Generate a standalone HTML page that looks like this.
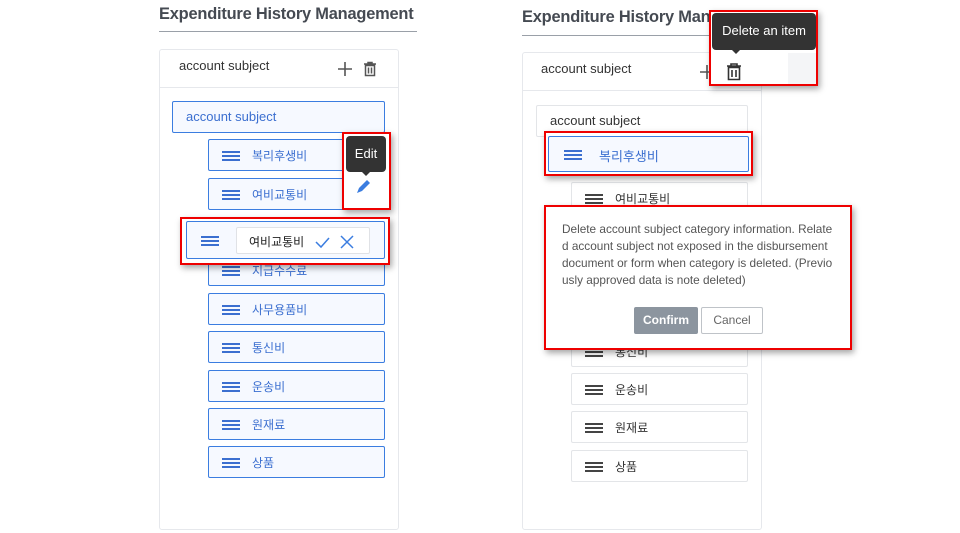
<!DOCTYPE html><html><head><meta charset="utf-8"><style>
body{margin:0;width:960px;height:533px;background:#fff;position:relative;overflow:hidden;font-family:"Liberation Sans","Noto Sans CJK KR",sans-serif;}
.a{position:absolute;box-sizing:border-box;}
.t{font-size:16.4px;font-weight:bold;color:#454a52;letter-spacing:-0.2px}
.panel{border:1px solid #e6e8ec;border-radius:3px;background:#fff}
.hd{font-size:13px;color:#333}
.it{border:1px solid #3b7de0;background:#f6f9ff;border-radius:2px;height:32px}
.it2{border:1px solid #e3e5e8;background:#fff;border-radius:2px;height:32px}
.hb{position:absolute;width:18px;height:2px;background:#3b6fd0;box-shadow:0 4px 0 #3b6fd0,0 8px 0 #3b6fd0}
.it2 .hb{background:#444;box-shadow:0 4px 0 #444,0 8px 0 #444}
.lb{position:absolute;font-size:12px;color:#3b6fd0;top:7px}
.it2 .lb{color:#333}
.red{border:2px solid #e00;box-shadow:2px 3px 6px rgba(0,0,0,.35)}
.tip{background:#333;color:#fff;border-radius:4px;font-size:13px;text-align:center}
</style></head><body>
<div class="a t" style="left:159px;top:5px">Expenditure History Management</div>
<div class="a" style="left:159px;top:31px;width:258px;height:1px;background:#9aa0a8"></div>
<div class="a panel" style="left:159px;top:49px;width:240px;height:481px"></div>
<div class="a hd" style="left:179px;top:58px">account subject</div>
<div class="a" style="left:160px;top:87px;width:238px;height:1px;background:#e6e8ec"></div>
<svg class="a" style="left:337px;top:61px" width="44" height="16"><path d="M8 1v14M1 8h14" stroke="#555" stroke-width="1.6"/><path d="M27 3h12M31 3V1.5h4V3M28.5 4.5h9v10h-9zM31.5 6.5v6M34.5 6.5v6" stroke="#555" stroke-width="1.5" fill="none"/></svg>
<div class="a it" style="left:172px;top:101px;width:213px"><span class="lb" style="left:13px;font-size:13px;top:7px">account subject</span></div>
<div class="a it" style="left:208px;top:139px;width:177px"><div class="hb" style="left:13px;top:11px"></div><span class="lb" style="left:43px">복리후생비</span></div>
<div class="a it" style="left:208px;top:178px;width:177px"><div class="hb" style="left:13px;top:11px"></div><span class="lb" style="left:43px">여비교통비</span></div>
<div class="a it" style="left:208px;top:254px;width:177px"><div class="hb" style="left:13px;top:11px"></div><span class="lb" style="left:43px">지급수수료</span></div>
<div class="a it" style="left:208px;top:293px;width:177px"><div class="hb" style="left:13px;top:11px"></div><span class="lb" style="left:43px">사무용품비</span></div>
<div class="a it" style="left:208px;top:331px;width:177px"><div class="hb" style="left:13px;top:11px"></div><span class="lb" style="left:43px">통신비</span></div>
<div class="a it" style="left:208px;top:370px;width:177px"><div class="hb" style="left:13px;top:11px"></div><span class="lb" style="left:43px">운송비</span></div>
<div class="a it" style="left:208px;top:408px;width:177px"><div class="hb" style="left:13px;top:11px"></div><span class="lb" style="left:43px">원재료</span></div>
<div class="a it" style="left:208px;top:446px;width:177px"><div class="hb" style="left:13px;top:11px"></div><span class="lb" style="left:43px">상품</span></div>
<div class="a red" style="left:342px;top:132px;width:49px;height:78px;background:#fff">
<div class="a tip" style="left:2px;top:2px;width:40px;height:36px;line-height:36px;font-size:13px">Edit</div>
<div class="a" style="left:17px;top:37px;width:0;height:0;border:5px solid transparent;border-top-color:#333"></div>
<svg class="a" style="left:10px;top:44px" width="18" height="18"><path d="M3 15l2-5 8-8 3 3-8 8z" fill="#3b7de0"/></svg></div>
<div class="a red" style="left:180px;top:217px;width:210px;height:48px;background:#fff">
<div class="a it" style="left:4px;top:2px;width:199px;height:38px"><div class="hb" style="left:14px;top:14px"></div>
<div class="a" style="left:49px;top:5px;width:134px;height:27px;border:1px solid #e0e2e6;background:#fff;border-radius:2px"><span style="position:absolute;left:12px;top:5px;font-size:12px;color:#222">여비교통비</span>
<svg class="a" style="left:78px;top:6px" width="50" height="16"><path d="M1 8l5 5 8-9" stroke="#3b7de0" stroke-width="1.5" fill="none"/><path d="M26 2l12 12M38 2L26 14" stroke="#3b7de0" stroke-width="1.5"/></svg></div></div></div>

<div class="a t" style="left:522px;top:8px">Expenditure History Man</div>
<div class="a" style="left:522px;top:35px;width:190px;height:1px;background:#9aa0a8"></div>
<div class="a panel" style="left:522px;top:52px;width:240px;height:478px"></div>
<div class="a hd" style="left:541px;top:61px">account subject</div>
<div class="a" style="left:523px;top:90px;width:238px;height:1px;background:#e6e8ec"></div>
<svg class="a" style="left:699px;top:64px" width="14" height="16"><path d="M8 1v14M1 8h14" stroke="#555" stroke-width="1.6"/></svg>
<div class="a it2" style="left:536px;top:105px;width:212px"><span class="lb" style="left:13px;font-size:13px;top:7px;color:#333">account subject</span></div>
<div class="a it2" style="left:571px;top:182px;width:177px"><div class="hb" style="left:13px;top:11px"></div><span class="lb" style="left:43px">여비교통비</span></div>
<div class="a it2" style="left:571px;top:335px;width:177px"><div class="hb" style="left:13px;top:11px"></div><span class="lb" style="left:43px">통신비</span></div>
<div class="a it2" style="left:571px;top:373px;width:177px"><div class="hb" style="left:13px;top:11px"></div><span class="lb" style="left:43px">운송비</span></div>
<div class="a it2" style="left:571px;top:411px;width:177px"><div class="hb" style="left:13px;top:11px"></div><span class="lb" style="left:43px">원재료</span></div>
<div class="a it2" style="left:571px;top:450px;width:177px"><div class="hb" style="left:13px;top:11px"></div><span class="lb" style="left:43px">상품</span></div>
<div class="a red" style="left:544px;top:131px;width:209px;height:45px;background:#fff">
<div class="a it" style="left:2px;top:3px;width:201px;height:36px"><div class="hb" style="left:15px;top:13px"></div><span class="lb" style="left:50px;top:9px;font-size:13px">복리후생비</span></div></div>
<div class="a red" style="left:709px;top:10px;width:109px;height:76px;background:#fff">
<div class="a" style="left:77px;top:41px;width:28px;height:31px;background:#f4f5f7"></div>
<div class="a tip" style="left:1px;top:1px;width:104px;height:37px;line-height:36px">Delete an item</div>
<div class="a" style="left:20px;top:37px;width:0;height:0;border:5px solid transparent;border-top-color:#333"></div>
<svg class="a" style="left:15px;top:51px" width="16" height="18"><path d="M1 3h14M5 3V1h6v2M2.5 4.5h11v12h-11zM6 7v7M10 7v7" stroke="#333" stroke-width="1.6" fill="none"/></svg></div>
<div class="a red" style="left:544px;top:205px;width:308px;height:145px;background:#fff">
<div class="a" style="left:16px;top:14px;width:276px;font-size:11.8px;line-height:17px;color:#555">Delete account subject category information. Relate<br>d account subject not exposed in the disbursement<br>document or form when category is deleted. (Previo<br>usly approved data is note deleted)</div>
<div class="a" style="left:88px;top:100px;width:64px;height:27px;background:#8c959f;border-radius:2px;color:#fff;font-size:12px;font-weight:bold;text-align:center;line-height:27px">Confirm</div>
<div class="a" style="left:155px;top:100px;width:62px;height:27px;border:1px solid #bfc3c8;border-radius:2px;color:#666;font-size:12px;text-align:center;line-height:25px">Cancel</div></div>
</body></html>
